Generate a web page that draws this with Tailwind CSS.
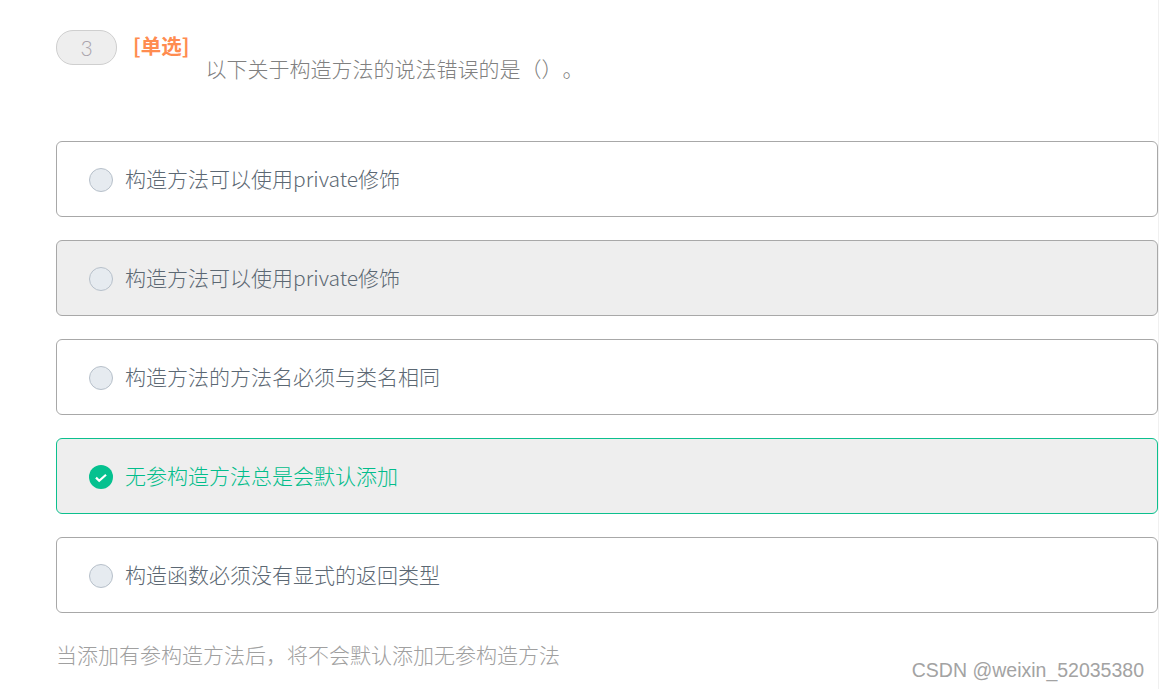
<!DOCTYPE html>
<html lang="zh"><head><meta charset="utf-8">
<script src="https://cdn.jsdelivr.net/npm/@tailwindcss/browser@4"></script>
</head>
<body class="bg-white">
<div class="relative w-[1159px] h-[689px] overflow-hidden bg-white font-['Noto_Sans_CJK_SC','Noto_Sans',sans-serif] border-r border-[#f0f0f0] pl-14 pr-0 pt-[30px]">
  <div class="flex items-start h-[111px]">
    <div class="w-[61px] h-[35px] rounded-[17px] border border-[#cfcfcf] bg-[#eeeeee] flex items-center justify-center text-[21px] font-light text-[#a8a2ab] font-['Lato',sans-serif]">3</div>
    <div class="ml-4 text-[20.5px] leading-[34px] font-bold text-[#ff8c50] -mt-[2px]">[单选]</div>
    <div class="ml-[16px] mt-[21px] text-[21px] leading-[34px] font-light text-[#808080] [text-spacing-trim:space-all]">以下关于构造方法的说法错误的是（）。</div>
  </div>
  <div class="flex flex-col gap-[23px] w-[1102px]">
    <div class="h-[76px] rounded-[6px] border border-[#a8a8a8] bg-white flex items-center pl-8">
      <span class="w-6 h-6 mt-[2px] rounded-full bg-[#e6ebf0] border border-[#b7c0ca] shrink-0"></span>
      <span class="ml-3 text-[21px] font-light text-[#5c6873]">构造方法可以使用private修饰</span>
    </div>
    <div class="h-[76px] rounded-[6px] border border-[#a8a8a8] bg-[#eeeeee] flex items-center pl-8">
      <span class="w-6 h-6 mt-[2px] rounded-full bg-[#e6ebf0] border border-[#b7c0ca] shrink-0"></span>
      <span class="ml-3 text-[21px] font-light text-[#5c6873]">构造方法可以使用private修饰</span>
    </div>
    <div class="h-[76px] rounded-[6px] border border-[#a8a8a8] bg-white flex items-center pl-8">
      <span class="w-6 h-6 mt-[2px] rounded-full bg-[#e6ebf0] border border-[#b7c0ca] shrink-0"></span>
      <span class="ml-3 text-[21px] font-light text-[#5c6873]">构造方法的方法名必须与类名相同</span>
    </div>
    <div class="h-[76px] rounded-[6px] border border-[#0cc08e] bg-[#eeeeee] flex items-center pl-8">
      <svg class="w-6 h-6 mt-[2px] shrink-0" viewBox="0 0 24 24"><circle cx="12" cy="12" r="12" fill="#05c18f"/><path d="M7 12.6l3.2 3.2L17 9.8" fill="none" stroke="#fff" stroke-width="2.2"/></svg>
      <span class="ml-3 text-[21px] font-light text-[#02bd8b]">无参构造方法总是会默认添加</span>
    </div>
    <div class="h-[76px] rounded-[6px] border border-[#a8a8a8] bg-white flex items-center pl-8">
      <span class="w-6 h-6 mt-[2px] rounded-full bg-[#e6ebf0] border border-[#b7c0ca] shrink-0"></span>
      <span class="ml-3 text-[21px] font-light text-[#5c6873]">构造函数必须没有显式的返回类型</span>
    </div>
  </div>
  <div class="mt-[24px] text-[21px] leading-[34px] font-light text-[#a0a0a0]">当添加有参构造方法后，将不会默认添加无参构造方法</div>
  <div class="absolute right-[14px] top-[659px] text-[19.5px] leading-[22px] text-[#a3a3a3] font-['Liberation_Sans',sans-serif]">CSDN @weixin_52035380</div>
</div>
</body></html>
